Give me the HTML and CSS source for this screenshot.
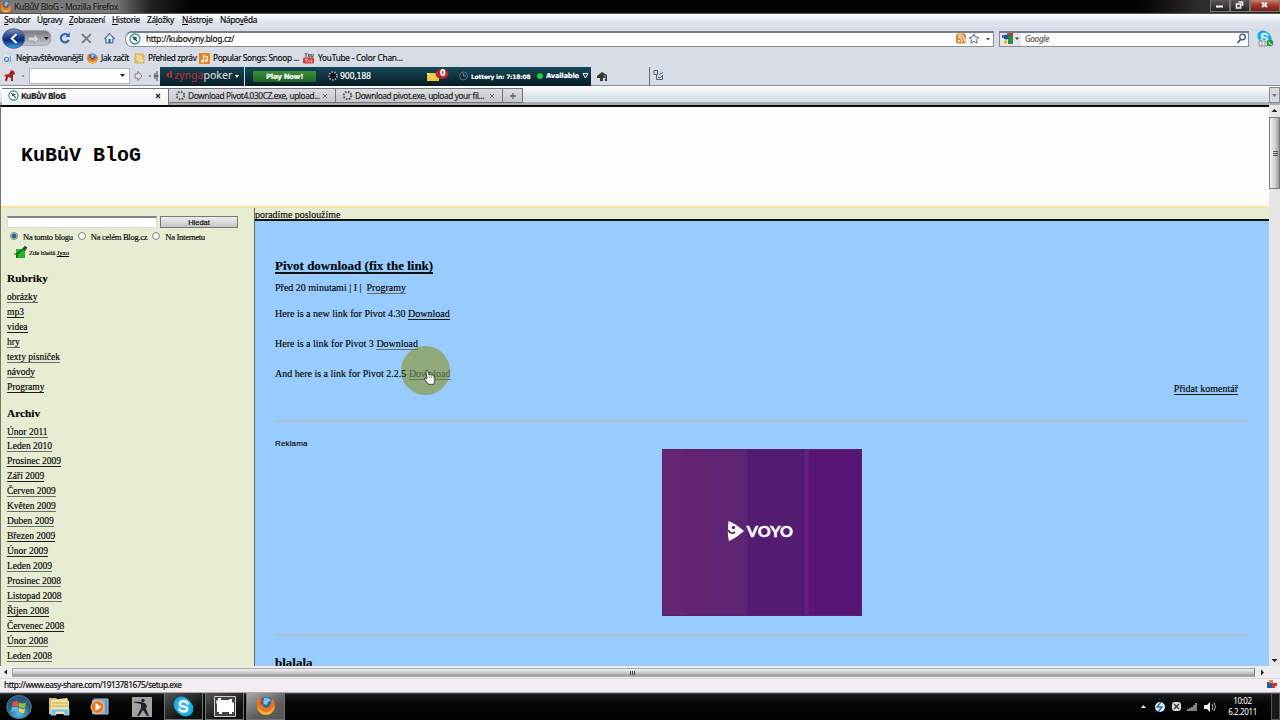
FILE: index.html
```html
<!DOCTYPE html>
<html lang="cs">
<head>
<meta charset="utf-8">
<title>KuBůV BloG - Mozilla Firefox</title>
<link rel="stylesheet" href="styles.css">
</head>
<body>
<svg width="0" height="0" class="defs">
  <defs>
    <symbol id="firefox" viewBox="0 0 20 20"><circle cx="10" cy="10" r="9" fill="#2866a8"/><path d="M8 2q5-1 7 3l-3 1-1 3-4-1z" fill="#7cc5ee"/><path d="M1 6Q1 2 4 1l1 4 3 1q-3 2-1 4 2 3 6 1l2-4 1-4q4 4 3 9-2 7-9 7-7 0-9-7z" fill="#e7761e"/><path d="M2 10q2 6 8 6t8-7q0 10-9 10Q2 18 2 10z" fill="#f5b337"/><path d="M4 5l4 2-3 2z" fill="#a63811"/></symbol>
    <symbol id="blog" viewBox="0 0 12 12"><circle cx="6" cy="6" r="5" fill="#fff" stroke="#278e98" stroke-width="1.3"/><path d="M3.6 3.5l4.8 5M4.500 6.500l2-2 1.500 1" stroke="#24494f" stroke-width="1.100" fill="none"/></symbol>
    <symbol id="spin" viewBox="0 0 12 12"><circle cx="6" cy="6" r="4.1" fill="none" stroke="#555" stroke-width="2.2" stroke-dasharray="1.8 1.4"/></symbol>
    <symbol id="skype" viewBox="0 0 20 20"><circle cx="8" cy="8" r="7.5" fill="#13a4de"/><circle cx="12" cy="12" r="7.5" fill="#13a4de"/><circle cx="10" cy="10" r="8" fill="#22b4eb"/><path d="M14 7.3Q13 5 10 5 6.5 5 6.5 7.5q0 2 3.500 2.500t3.500 2.300q0 2.400-3.500 2.500-3.200 0-4-2.500" fill="none" stroke="#fff" stroke-width="2.3" stroke-linecap="round"/></symbol>
  </defs>
</svg>
<div class="titlebar">
  <svg class="i12" ><use href="#firefox"/></svg><span class="wtitle">KuBůV BloG - Mozilla Firefox</span>
  <div class="winbtns">
    <div class="wb"><svg width="18" height="12"><path d="M5 6.500h7" stroke="#fff" stroke-width="2"/></svg></div>
    <div class="wb"><svg width="18" height="12"><path d="M7.500 2h4v4M5.500 4h4v4h-4z" fill="none" stroke="#eee" stroke-width="1.600"/></svg></div>
    <div class="wb close"><svg width="31" height="12"><path d="M11 2.500l5 4.500M16 2.500l-5 4.500" stroke="#fff" stroke-width="1.7"/></svg></div>
  </div>
</div>
<div class="menubar">
  <span style="width:33px"><u>S</u>oubor</span><span style="width:32px">Ú<u>p</u>ravy</span><span style="width:43px"><u>Z</u>obrazení</span><span style="width:35px"><u>H</u>istorie</span><span style="width:35px">Zá<u>l</u>ožky</span><span style="width:38px"><u>N</u>ástroje</span><span>Nápo<u>v</u>ěda</span>
</div>
<div class="navbar">
  <svg width="128" height="22" viewBox="0 0 128 22" class="navicons">
    <defs><linearGradient id="bk" x1="0" x2="0" y1="0" y2="1"><stop offset="0" stop-color="#7f96c6"/><stop offset=".45" stop-color="#173a86"/><stop offset=".6" stop-color="#0a2b80"/><stop offset="1" stop-color="#3cb2f0"/></linearGradient><linearGradient id="fw" x1="0" x2="0" y1="0" y2="1"><stop offset="0" stop-color="#777"/><stop offset="1" stop-color="#c9cbd0"/></linearGradient></defs>
    <rect x="10" y="2.500" width="42" height="15" rx="6" fill="url(#fw)" stroke="#9b9ea5"/><path d="M29 9h6V6l5 5-5 5v-3h-6z" fill="#d4d5d8" stroke="#888" stroke-width=".6"/><path d="M45 9h5l-2.500 3z" fill="#222"/>
    <ellipse cx="14" cy="10.500" rx="11.300" ry="10" fill="url(#bk)" stroke="#46597f"/><path d="M17 6l-5 4.500 5 4.500" fill="none" stroke="#fff" stroke-width="2"/>
    <path d="M70 7.500A4.300 4.300 0 1 0 70.500 12" fill="none" stroke="#2e63b0" stroke-width="2.200"/><path d="M67 9h4.500V4z" fill="#2e63b0"/>
    <path d="M84 6l9 9M93 6l-9 9" stroke="#777c84" stroke-width="2"/>
    <path d="M107 11l5-5.500 5.500 5.500M108.500 10.500V15h7v-4.500" fill="#eaf3fc" stroke="#4e76a6" stroke-width="1.300"/><path d="M111 11h2.500v4H111z" fill="#40699b"/>
  </svg>
  <div class="url"><svg class="i12"><use href="#blog"/></svg><span>http://kubovyny.blog.cz/</span>
    <svg width="38" height="14" class="right"><rect x="1" y="1.500" width="10" height="10" rx="1.500" fill="#dc8b3a"/><path d="M3 5q4 0 4 5M3 3q7 0 7 7" fill="none" stroke="#fff" stroke-width="1.100"/><circle cx="4" cy="9" r="1" fill="#fff"/><path d="M19 2l1.500 3 3.500.500-2.500 2.200.700 3.400L19 9.500l-3.200 1.600.700-3.400L14 5.500l3.500-.500z" fill="#f5f7fa" stroke="#596c85"/><path d="M31 6h4l-2 2.500z" fill="#444"/></svg>
  </div>
  <div class="search"><svg width="21" height="14"><rect width="21" height="14" fill="#e3e5e7"/><rect x="2" y="2" width="11" height="10" fill="#eee"/><path d="M7 1h6v11H8V7z" fill="#298d49"/><path d="M9 1h4v3H9z" fill="#c73333"/><circle cx="6" cy="5" r="2.500" fill="#2451a0"/><path d="M2 3h2v3H2z" fill="#3573bd"/><circle cx="5.500" cy="10" r="2" fill="#edbb37"/><path d="M15 5.500h4l-2 2.500z" fill="#444"/></svg><i>Google</i><svg width="12" height="12" class="right"><circle cx="6.500" cy="4" r="2.800" fill="#fff" stroke="#2c5280" stroke-width="1.300"/><path d="M4.500 6.500l-3 3.500" stroke="#31536f" stroke-width="1.700"/></svg></div>
  <svg width="17" height="17" viewBox="0 0 17 17" class="sk"><use href="#skype" width="15" height="15"/><path d="M2 11h9v5H2z" fill="#e8edf0" stroke="#777" stroke-width=".7"/><path d="M5 11v5M8 11v5" stroke="#777" stroke-width=".7"/><circle cx="13" cy="13" r="3.300" fill="#25963b"/><path d="M11.800 11.500q0 3 3 3" stroke="#fff" fill="none"/></svg>
</div>
<div class="bookmarks">
  <span class="bm b1"><svg class="i11" viewBox="0 0 12 12"><path d="M1 1h10v10H1z" fill="#dbe8f6" stroke="#b4c6da" stroke-width=".7"/><circle cx="5" cy="7" r="2.200" fill="none" stroke="#5681b6" stroke-width="1.300"/><path d="M9 3v7" stroke="#5681b6"/></svg>Nejnavštěvovanější</span>
  <span class="bm b2"><svg class="i11"><use href="#firefox"/></svg>Jak začít</span>
  <span class="bm b3"><svg class="i11" viewBox="0 0 12 12"><path d="M1 1h9l1 2v8H1z" fill="#f0c353" stroke="#bd9341" stroke-width=".6"/><path d="M3 6q3 0 3 4M3 3q6 0 6 7" fill="none" stroke="#fff" stroke-width="1.200"/></svg>Přehled zpráv</span>
  <span class="bm b4"><svg class="i11" viewBox="0 0 12 12"><path d="M0 0h12v12H0z" fill="#ee811c"/><path d="M5 9V3l4 1v4" fill="none" stroke="#fff" stroke-width="1.300"/><circle cx="4" cy="9" r="1.500" fill="#fff"/><circle cx="8" cy="8.500" r="1.300" fill="#fff"/></svg>Popular Songs: Snoop ...</span>
  <span class="bm b5"><svg class="i11" viewBox="0 0 12 12"><rect y="5" width="12" height="6.500" rx="1.500" fill="#d13b34"/><path d="M2 0l1.300 2L4.600 0M3.300 2v2.500M6 1.500h1.500v2.500H6zM9 1v3h2V1" fill="none" stroke="#443"/><path d="M2 7h3M3.500 7v3M6 7.500v2h1.500M9 7v3h1.500" stroke="#fff" fill="none" stroke-width=".7"/></svg>YouTube - Color Chan...</span>
</div>
<div class="toolbar">
  <svg width="29" height="18" class="dog"><path d="M4 8l5-1 2-4 3 1 1 3-2 1v6h-2v-3l-3-1-1 4H5l1-4z" fill="#a82527"/><path d="M11 5l1 2M7 9l-1 4" stroke="#611"/><path d="M22 9h2" stroke="#555"/></svg>
  <div class="combo"><svg width="8" height="6"><path d="M1 1h5L3.500 4z" fill="#222"/></svg></div>
  <svg width="29" height="18"><path d="M5 7h3V4.500L12 9l-4 4.500V11H5z" fill="#e7e9ec" stroke="#666" stroke-width=".8"/><path d="M19 9h2M23.500 9h5M25 6v6M27 4v10" stroke="#444"/></svg>
  <div class="zynga"><svg width="8" height="10"><path d="M1 5l3-3v6zM5 1h2v7H5z" fill="#c02c32"/></svg><span><em>zynga</em>poker</span><svg width="6" height="6"><path d="M1 2h4L3 5z" fill="#fff"/></svg></div>
  <div class="game">
    <div class="play">Play Now!</div>
    <span class="chips"><svg width="12" height="12"><circle cx="6" cy="6" r="4" fill="#15191b" stroke="#aeb8b9" stroke-width="1.500" stroke-dasharray="1.500 1.300"/></svg>900,188</span>
    <span class="mail"><svg width="24" height="16"><path d="M1 5h12v8H1z" fill="#efc640"/><path d="M1 5l6 5 6-5" stroke="#fff3b5" fill="none"/><ellipse cx="16" cy="6" rx="6.500" ry="5" fill="#b3282d"/></svg><b>0</b></span>
    <span class="lottery"><svg width="11" height="12"><circle cx="5.500" cy="6" r="4" fill="none" stroke="#59747e"/><path d="M5.500 3.500V6h2" stroke="#7d939b" fill="none"/></svg>Lottery in: 7:18:08</span>
    <span class="avail"><svg width="8" height="10"><circle cx="4" cy="5" r="3" fill="#21cc3a"/></svg>Available<svg width="9" height="8"><path d="M2 1.500h5L4.500 6z" fill="none" stroke="#fff"/></svg></span>
  </div>
  <svg width="17" height="18"><path d="M6 9l5-4 5 3v6h-2v-3h-2v3H9v-3H6z" fill="#353535"/><path d="M12 8h3v5" fill="#777"/></svg>
  <div class="sep"></div>
  <svg width="16" height="18"><path d="M4 3.500h3.500v4H4zM9 7.500l4-2M6.500 8v4.500h6V8M8 10l2 1 3-3" stroke="#56617e" fill="none"/></svg>
</div>
<div class="tabs">
  <div class="tab on"><svg class="i11"><use href="#blog"/></svg><span>KuBůV BloG</span><svg width="6" height="6" class="right"><path d="M1 1l4 4M5 1L1 5" stroke="#222" stroke-width="1.200"/></svg></div>
  <div class="tab"><svg class="i11"><use href="#spin"/></svg><span>Download Pivot4.030CZ.exe, upload...</span><svg width="6" height="6" class="right"><path d="M1 1l4 4M5 1L1 5" stroke="#666"/></svg></div>
  <div class="tab"><svg class="i11"><use href="#spin"/></svg><span>Download pivot.exe, upload your fil...</span><svg width="6" height="6" class="right"><path d="M1 1l4 4M5 1L1 5" stroke="#666"/></svg></div>
  <div class="tab plus"><svg width="8" height="8"><path d="M4 1v6M1 4h6" stroke="#666" stroke-width="1.300"/></svg></div>
  <div class="tablist"><svg width="6" height="5"><path d="M0 1h5L2.500 4z" fill="#777"/></svg></div>
</div>
<div class="view">
  <div class="page">
    <div class="bloghead">KuBůV BloG</div>
    <div class="cols">
      <div class="side">
        <div class="find"><div class="field"></div><div class="btn">Hledat</div></div>
        <div class="radios"><i class="on"></i><span>Na tomto blogu</span><i></i><span>Na celém Blog.cz</span><i></i><span>Na Internetu</span></div>
        <div class="jyxo"><svg width="16" height="16"><path d="M3 4h9v9H3z" fill="#20b72c"/><path d="M1 9h3v4M4 9l4-3 4-4 2 1M11 5h2" stroke="#164b17" fill="none" stroke-width="1.200"/><circle cx="12" cy="3" r="1.700" fill="#244c24"/></svg>Zde hledá&nbsp;<u>Jyxo</u></div>
        <h3>Rubriky</h3>
        <ul><li><a>obrázky</a></li><li><a class="k">mp3</a></li><li><a class="k">videa</a></li><li><a>hry</a></li><li><a>texty písniček</a></li><li><a>návody</a></li><li><a class="k">Programy</a></li></ul>
        <h3 class="h2nd">Archiv</h3>
        <ul><li><a>Únor 2011</a></li><li><a>Leden 2010</a></li><li><a class="k">Prosinec 2009</a></li><li><a class="k">Září 2009</a></li><li><a>Červen 2009</a></li><li><a>Květen 2009</a></li><li><a>Duben 2009</a></li><li><a class="k">Březen 2009</a></li><li><a class="k">Únor 2009</a></li><li><a>Leden 2009</a></li><li><a>Prosinec 2008</a></li><li><a>Listopad 2008</a></li><li><a class="k">Říjen 2008</a></li><li><a class="k">Červenec 2008</a></li><li><a>Únor 2008</a></li><li><a>Leden 2008</a></li></ul>
      </div>
      <div class="main">
        <div class="tagline">poradíme posloužíme</div>
        <div class="post">
          <h2><a>Pivot download (fix the link)</a></h2>
          <p class="meta">Před 20 minutami | I |&nbsp; <a>Programy</a></p>
          <p>Here is a new link for Pivot 4.30 <a class="k">Download</a></p>
          <p>Here is a link for Pivot 3 <a>Download</a></p>
          <p>And here is a link for Pivot 2.2.5 <span class="target"><a class="hov">Download</a><span class="halo"></span>
            <svg class="hand" width="13" height="17" viewBox="0 0 13 17"><path d="M3 1.500q1.300-.8 2 .5l1 4 1.500-.5 1 .8 1.300-.3.800.900 1 .1.300 4-1.200 4.300H5.500L1.300 10q0-1.500 1.500-.7L4 10z" fill="#fff" stroke="#222" stroke-width=".8"/><path d="M6.500 6.500v2.500M8.700 7v2M10.500 7.500v2" stroke="#555" stroke-width=".6"/></svg></span></p>
          <div class="comment"><a class="k">Přidat komentář</a></div>
          <div class="rule"></div>
          <div class="adlabel">Reklama</div>
          <div class="ad"><svg width="18" height="22"><path d="M1.500 1Q9 4 17 11 9 18 2 21 0 14 1.500 1z" fill="#fff"/><circle cx="6.500" cy="7.500" r="1.700" fill="#572071"/><path d="M1 10q3 5 7 2" stroke="#572071" stroke-width="1.600" fill="none"/></svg><span>VOYO</span></div>
          <div class="rule r2nd"></div>
          <h2 class="next">blalala</h2>
        </div>
      </div>
    </div>
  </div>
  <div class="vscroll"><svg width="11" height="12"><path d="M2.500 7h6L5.500 4z" fill="#222"/></svg><div class="vthumb"></div><svg width="11" height="12"><path d="M2.500 5h6L5.500 8z" fill="#222"/></svg></div>
</div>
<div class="hscroll"><svg width="12" height="11"><path d="M7 2.500v5L4 5z" fill="#222"/></svg><div class="hthumb"></div><svg width="12" height="11"><path d="M6 2.500v6l3-3z" fill="#222"/></svg><div class="corner"></div></div>
<div class="status"><span>http://www.easy-share.com/1913781675/setup.exe</span><svg width="12" height="12"><path d="M1 3h5v6H1z" fill="#31549e"/><path d="M3 1h4v3H3z" fill="#d88c36"/><path d="M6 4h5v3H9v2H6z" fill="#d1362e"/></svg></div>
<div class="taskbar">
  <div class="t start"><svg width="28" height="26" viewBox="0 0 28 26"><defs><radialGradient id="orb" cy=".8"><stop offset="0" stop-color="#4cc3ed"/><stop offset="1" stop-color="#295a80"/></radialGradient></defs><ellipse cx="14" cy="13" rx="12.300" ry="11.500" fill="url(#orb)" stroke="#5d7789"/><path d="M8 8q3-2 5.500 0v4.500q-3-1-6.500 0z" fill="#e9542c"/><path d="M14 8.500q3 2 7 0l-1 5q-3 1-6-1z" fill="#8cc43a"/><path d="M7 13.500q3-1 6.500 0V18q-3-2-7.500 0z" fill="#65b4ec"/><path d="M14 14q3 2 6 1l-1 4q-3 0-5-1z" fill="#f7d03d"/></svg></div>
  <div class="t exp"><svg width="24" height="24"><path d="M2 3h7l2 2h9v14H2z" fill="#d9b767"/><path d="M4 5l16-2 2 4v12H4z" fill="#f2df9d"/><path d="M5 8h16M5 11h16" stroke="#c8ad62"/><path d="M4 20v-6h18v6h-5v-3H9v3z" fill="#80bede" stroke="#d6edf5" stroke-width=".7"/></svg></div>
  <div class="t wmp"><svg width="22" height="22"><path d="M5 3h14v15H5z" fill="#6791b8" stroke="#abc8de"/><path d="M3 4h13v14H3z" fill="#8fb3d1"/><circle cx="8.500" cy="11" r="6.500" fill="#ed771e" stroke="#f7cb9c"/><path d="M6.500 7v8l6-4z" fill="#fff"/></svg></div>
  <div class="t cs"><svg width="20" height="20"><path d="M0 0h20v20H0z" fill="#a0a3a5"/><circle cx="11" cy="3.500" r="1.800" fill="#20252b"/><path d="M2 4.500l7 .5 4 1 2 3-1 3 3 7h-2l-4-6-4 6H5l4-8V7L2 5.500z" fill="#20252b"/></svg></div>
  <div class="t box"><svg width="21" height="21"><use href="#skype"/></svg></div>
  <div class="t box b"><svg width="22" height="21"><path d="M.500.500h21v20H.500z" fill="#444" stroke="#ccc"/><path d="M2 5l2-1V2h3v2h8V3h3v3l2 1v9h-2v2h-3v-2H8v2H5v-2H3V9z" fill="#fff"/></svg></div>
  <div class="t box act"><svg width="22" height="20"><use href="#firefox"/></svg></div>
  <div class="tray"><svg width="86" height="18"><path d="M3 10h5l-2.500-3z" fill="#eee"/><circle cx="22" cy="9" r="5" fill="#dceefa"/><path d="M23 4l-4 5h5l-4 5" stroke="#3265a5" fill="none" stroke-width="1.300"/><rect x="34" y="4" width="9" height="9" rx="3" fill="#ddd"/><path d="M36 6l5 5M41 6l-5 5" stroke="#333" stroke-width="1.300"/><path d="M50 13v-2M52 13v-3M54 13V9M56 13V7M58 13V5" stroke="#fff"/><path d="M66 7h3l3-3v10l-3-3h-3z" fill="#eee"/><path d="M74 6q2 3 0 6M76 4.500q3 4 0 8.500" fill="none" stroke="#ddd" stroke-width=".8"/></svg></div>
  <div class="clock">10:02<br>6.2.2011</div>
  <div class="show"></div>
</div>
</body>
</html>
```
FILE: styles.css
```css
* { box-sizing: border-box; }
body { margin: 0; width: 1280px; height: 720px; overflow: hidden; display: flex; flex-direction: column; font: 8.3px/12px "Noto Sans", sans-serif; letter-spacing: -.37px; color: #080808; background: #d7dce6; -webkit-text-stroke: .15px currentColor; }
svg { display: block; flex: none; }
.defs { position: absolute; }
.i12 { width: 12px; height: 12px; }
.i11 { width: 11px; height: 11px; }
.right { margin-left: auto; }

.titlebar { height: 14px; flex: none; display: flex; align-items: center; border-bottom: 1px solid #555; background: radial-gradient(ellipse at 228px 15px, #d6d2ca 0, #999 9px, transparent 15px), radial-gradient(ellipse at 280px 7px, #656565 0, transparent 16px), radial-gradient(ellipse at 184px 7px, #58332a 0, transparent 10px), radial-gradient(ellipse at 633px 10px, #ccc 0, #777 8px, transparent 13px), linear-gradient(90deg, #777 0, #777 115px, #222 150px, #020303 190px, #020303 1140px, #302b2d 1200px, #222 1280px); }
.wtitle { margin-left: 2px; color: #161616; letter-spacing: -.3px; font-size: 8.5px; text-shadow: 0 0 3px #aaa; }
.winbtns { margin-left: auto; display: flex; align-self: flex-start; width: 70px; }
.wb { height: 12px; border: 1px solid #777; border-top: 0; background: linear-gradient(#5c5658, #252021); overflow: hidden; }
.close { flex: 1; background: linear-gradient(#c38477, #a53324 50%, #6e2119); }
.menubar { height: 15px; flex: none; padding: 0 0 3px 4px; display: flex; align-items: center; background: linear-gradient(#fff, #dce1eb 60%, #d9dee8); letter-spacing: -.32px; }
.menubar span { line-height: 12px; white-space: nowrap; }
.navbar { height: 19px; flex: none; display: flex; align-items: center; }
.navicons { margin: -2px 0; width: 125px; }
.url { width: 869px; height: 16px; border: 1px solid #898c93; border-top: 2px solid #797d84; border-radius: 7px 0 0 7px; background: #fefefe; display: flex; align-items: center; padding: 0 0 1px 3px; }
.url span { margin-left: 5px; letter-spacing: -.26px; }
.search { margin-left: 5px; width: 250px; height: 16px; border: 1px solid #898c93; border-top: 2px solid #797d84; background: #fefefe; display: flex; align-items: center; overflow: hidden; padding-bottom: 1px; }
.search i { margin-left: 4px; color: #555; letter-spacing: -.35px; }
.sk { margin-left: 8px; }
.bookmarks { height: 19px; flex: none; display: flex; align-items: center; padding-top: 1px; }
.bm { display: flex; align-items: center; gap: 3px; white-space: nowrap; padding-left: 2px; }
.b1 { width: 85px; letter-spacing: -.42px; } .b2 { width: 47px; } .b3 { width: 65px; } .b4 { width: 104px; letter-spacing: -.35px; } .b5 { letter-spacing: -.25px; gap: 4px; }
.toolbar { height: 19px; flex: none; display: flex; align-items: center; border-bottom: 1px solid #8b8e94; }
.combo { width: 101px; height: 16px; background: #fff; border: 1px solid #b1b4ba; display: flex; align-items: center; justify-content: flex-end; padding-right: 2px; }
.zynga { margin-left: 1px; width: 84px; height: 19px; background: linear-gradient(#164353, #071f2b); display: flex; align-items: center; padding: 0 0 2px 5px; gap: 1px; font: 10.5px/14px "Noto Sans", sans-serif; color: #d7d8d8; letter-spacing: .05px; }
.zynga span { width: 54px; }
.zynga em { font-style: normal; color: #b62a31; }
.zynga > svg:last-child { margin: 2px 0 0 5px; }
.game { width: 347px; height: 19px; border-left: 1px solid #cdd; background: linear-gradient(#174958, #061c27); display: flex; align-items: center; color: #fff; font: bold 8px "DejaVu Sans", sans-serif; }
.game > span { display: flex; align-items: center; }
.play { margin-left: 8px; width: 63px; height: 11px; background: linear-gradient(#3a9238, #1f6226); text-align: center; font-size: 7.2px; line-height: 11px; }
.chips { margin-left: 11px; gap: 1px; width: 99px; font-weight: normal; font-size: 8px; letter-spacing: -.35px; }
.mail { position: relative; width: 32px; }
.mail b { position: absolute; left: 14px; top: 1px; font-size: 8px; line-height: 10px; }
.lottery { width: 78px; font-size: 6px; letter-spacing: -.2px; gap: 2px; white-space: nowrap; }
.avail { gap: 2px; font-size: 6.8px; letter-spacing: -.25px; }
.sep { width: 1px; height: 19px; background: #686b70; margin-left: 41px; }
.tabs { height: 19px; flex: none; display: flex; align-items: flex-end; padding-left: 2px; background: linear-gradient(#fff, #d7e0e9 65%, #dfe5ed 82%, #a1a4ab 88%, #b5b5b9); }
.tab { width: 167px; height: 15px; margin-bottom: 2px; border: 1px solid #707379; border-width: 1px 1px 1px 0; background: linear-gradient(#dcdee1, #c3c6cb); padding: 0 7px 0 6px; display: flex; align-items: center; gap: 2px; white-space: nowrap; color: #222; letter-spacing: -.4px; }
.tab.on { height: 17px; margin-bottom: 0; padding-bottom: 3px; gap: 2px; background: linear-gradient(#fff, #eeeff2); font-weight: bold; border-bottom: 0; letter-spacing: -.4px; }
.plus { width: 20px; padding-left: 6px; }
.tablist { width: 11px; height: 16px; margin-left: auto; margin-bottom: 2px; border: 1px solid #898b90; background: #d5d8de; display: flex; align-items: center; justify-content: center; }

.view { height: 561px; flex: none; display: flex; }
.page { width: 1269px; height: 561px; overflow: hidden; border-top: 2px solid #090909; border-left: 1px solid #74756d; background: #fefdfe; font-family: "Liberation Serif", serif; letter-spacing: 0; display: flex; flex-direction: column; color: #050505; }
.bloghead { height: 101px; flex: none; padding: 37px 0 0 20px; font: bold 20px/24px "Courier New", "Liberation Mono", monospace; border-bottom: 2px solid #fae39d; color: #000; -webkit-text-stroke: 0; }
.cols { display: flex; flex: 1; }
.side { width: 254px; padding: 8px 0 0 6px; background: #e7edd3; border-right: 1px solid #646d65; font-size: 9.500px; }
.find { display: flex; gap: 3px; }
.field { width: 150px; height: 12px; background: #fff; border: 1px solid #d8dbd1; border-top: 2px solid #808580; }
.btn { width: 78px; height: 12px; border: 1px solid #777; background: linear-gradient(#eee, #c5c5c6); text-align: center; font: 7.5px/12px "Liberation Sans", sans-serif; }
.radios { display: flex; align-items: center; height: 18px; font-size: 8.600px; white-space: nowrap; letter-spacing: -.3px; }
.radios i { width: 8px; height: 8px; margin: -2px 5px 0 5px; border: 1px solid #85878a; border-radius: 50%; background: #f5f7f3; }
.radios i.on { margin-left: 3px; background: radial-gradient(circle, #246a85 0 2px, #d7e1e3 3px); }
.jyxo { display: flex; align-items: center; height: 14px; padding-left: 6px; font-size: 6.800px; letter-spacing: -.1px; }
h3 { margin: 11px 0 5px; font: bold 11.3px/14px "Liberation Serif", serif; }
h3.h2nd { margin-top: 11px; }
ul { list-style: none; margin: 0; padding: 0; }
li { height: 14.95px; display: flex; align-items: center; }
a { border-bottom: 1px solid #66706a; display: inline-block; line-height: 10px; }
a.k { border-bottom: 1.500px solid #191d19; }
.main { flex: 1; background: #99ccfe; font-size: 10px; }
.tagline { height: 13px; line-height: 14px; background: #e7edd3; border-bottom: 2px solid #111; font-size: 9.9px; }
.post { position: relative; z-index: 0; padding: 38px 19px 0 20px; display: flex; flex-direction: column; }
h2 { margin: 0; font: bold 13px/14px "Liberation Serif", serif; }
h2 a { line-height: 13px; border-bottom: 2px solid #111; }
p { margin: 0 0 17.800px; line-height: 12px; white-space: nowrap; }
.meta { margin: 8px 0 14px; }
.target { position: relative; }
.hov { color: #56664c; border-color: #667861; }
.halo { position: absolute; z-index: -1; left: -8px; top: -22px; width: 49px; height: 49px; border-radius: 50%; background: #8faa78; }
.hand { position: absolute; left: 14px; top: 1px; }
.comment { text-align: right; height: 12px; margin: -14px 12px 0 0; }
.rule { height: 3px; background: #a6c5dd; margin: 25px 0 0 -1px; border-radius: 2px; }
.adlabel { margin-top: 15px; font: 8px/12px "Liberation Sans", sans-serif; height: 12px; letter-spacing: .15px; }
.ad { width: 200px; height: 167px; margin: -1px 0 0 387px; background: linear-gradient(90deg, #642673 0 11%, #622370 12% 25%, #5f2575 26% 42%, #541c70 43% 71%, #661f86 72% 73%, #571673 74%); border: 1px solid #552171; display: flex; align-items: center; justify-content: center; gap: 2px; padding: 0 4px 4px 0; color: #fff; font: bold 16px/22px Lato, sans-serif; letter-spacing: .2px; -webkit-text-stroke: .5px #fff; }
.r2nd { margin-top: 17px; }
.next { margin-top: 20px; }
.vscroll { width: 11px; background: #e7e6e7; display: flex; flex-direction: column; }
.vthumb { height: 72px; margin-bottom: auto; border: 1px solid #77797c; background: repeating-linear-gradient(#555 0 1px, transparent 1px 2px) 3px 33px / 5px 5px no-repeat, linear-gradient(90deg, #f5f5f5, #ccc 60%, #999); }
.hscroll { height: 12px; flex: none; display: flex; align-items: center; background: #eeecee; }
.hthumb { width: 1243px; height: 9px; border: 1px solid #aaa; border-right-color: #777; background: repeating-linear-gradient(90deg, #444 0 1px, transparent 1px 2px) 617px 2px / 5px 4px no-repeat, linear-gradient(#f1f1f1, #cdccce 50%, #999); }
.corner { flex: 1; }
.status { height: 14px; flex: none; background: #f1edf0; border-top: 1px solid #ddd; padding: 0 2px 2px 4px; display: flex; align-items: center; justify-content: space-between; letter-spacing: -.45px; }
.taskbar { height: 28px; flex: none; background: linear-gradient(#777 0, #181a1b 1px, #050707 40%, #000); border-top: 1px solid #aaa; display: flex; align-items: center; }
.t { width: 41px; height: 27px; display: flex; align-items: center; justify-content: center; }
.start { width: 37px; }
.exp { width: 44px; } .wmp { width: 38px; } .cs { width: 45px; }
.box { width: 39px; border: 1px solid #717476; border-top: 0; background: linear-gradient(150deg, #555, #111 70%); margin-right: 2px; }
.act { background: linear-gradient(150deg, #aaa, #5d5d5e 60%, #555); }
.tray { margin-left: auto; width: 82px; }
.clock { width: 40px; padding: 0 0 2px 5px; text-align: center; color: #fff; font-size: 8px; line-height: 11px; letter-spacing: -.38px; -webkit-text-stroke: 0; }
.show { width: 9px; height: 27px; margin-left: 11px; border: 1px solid #555; background: #18191a; }
```
